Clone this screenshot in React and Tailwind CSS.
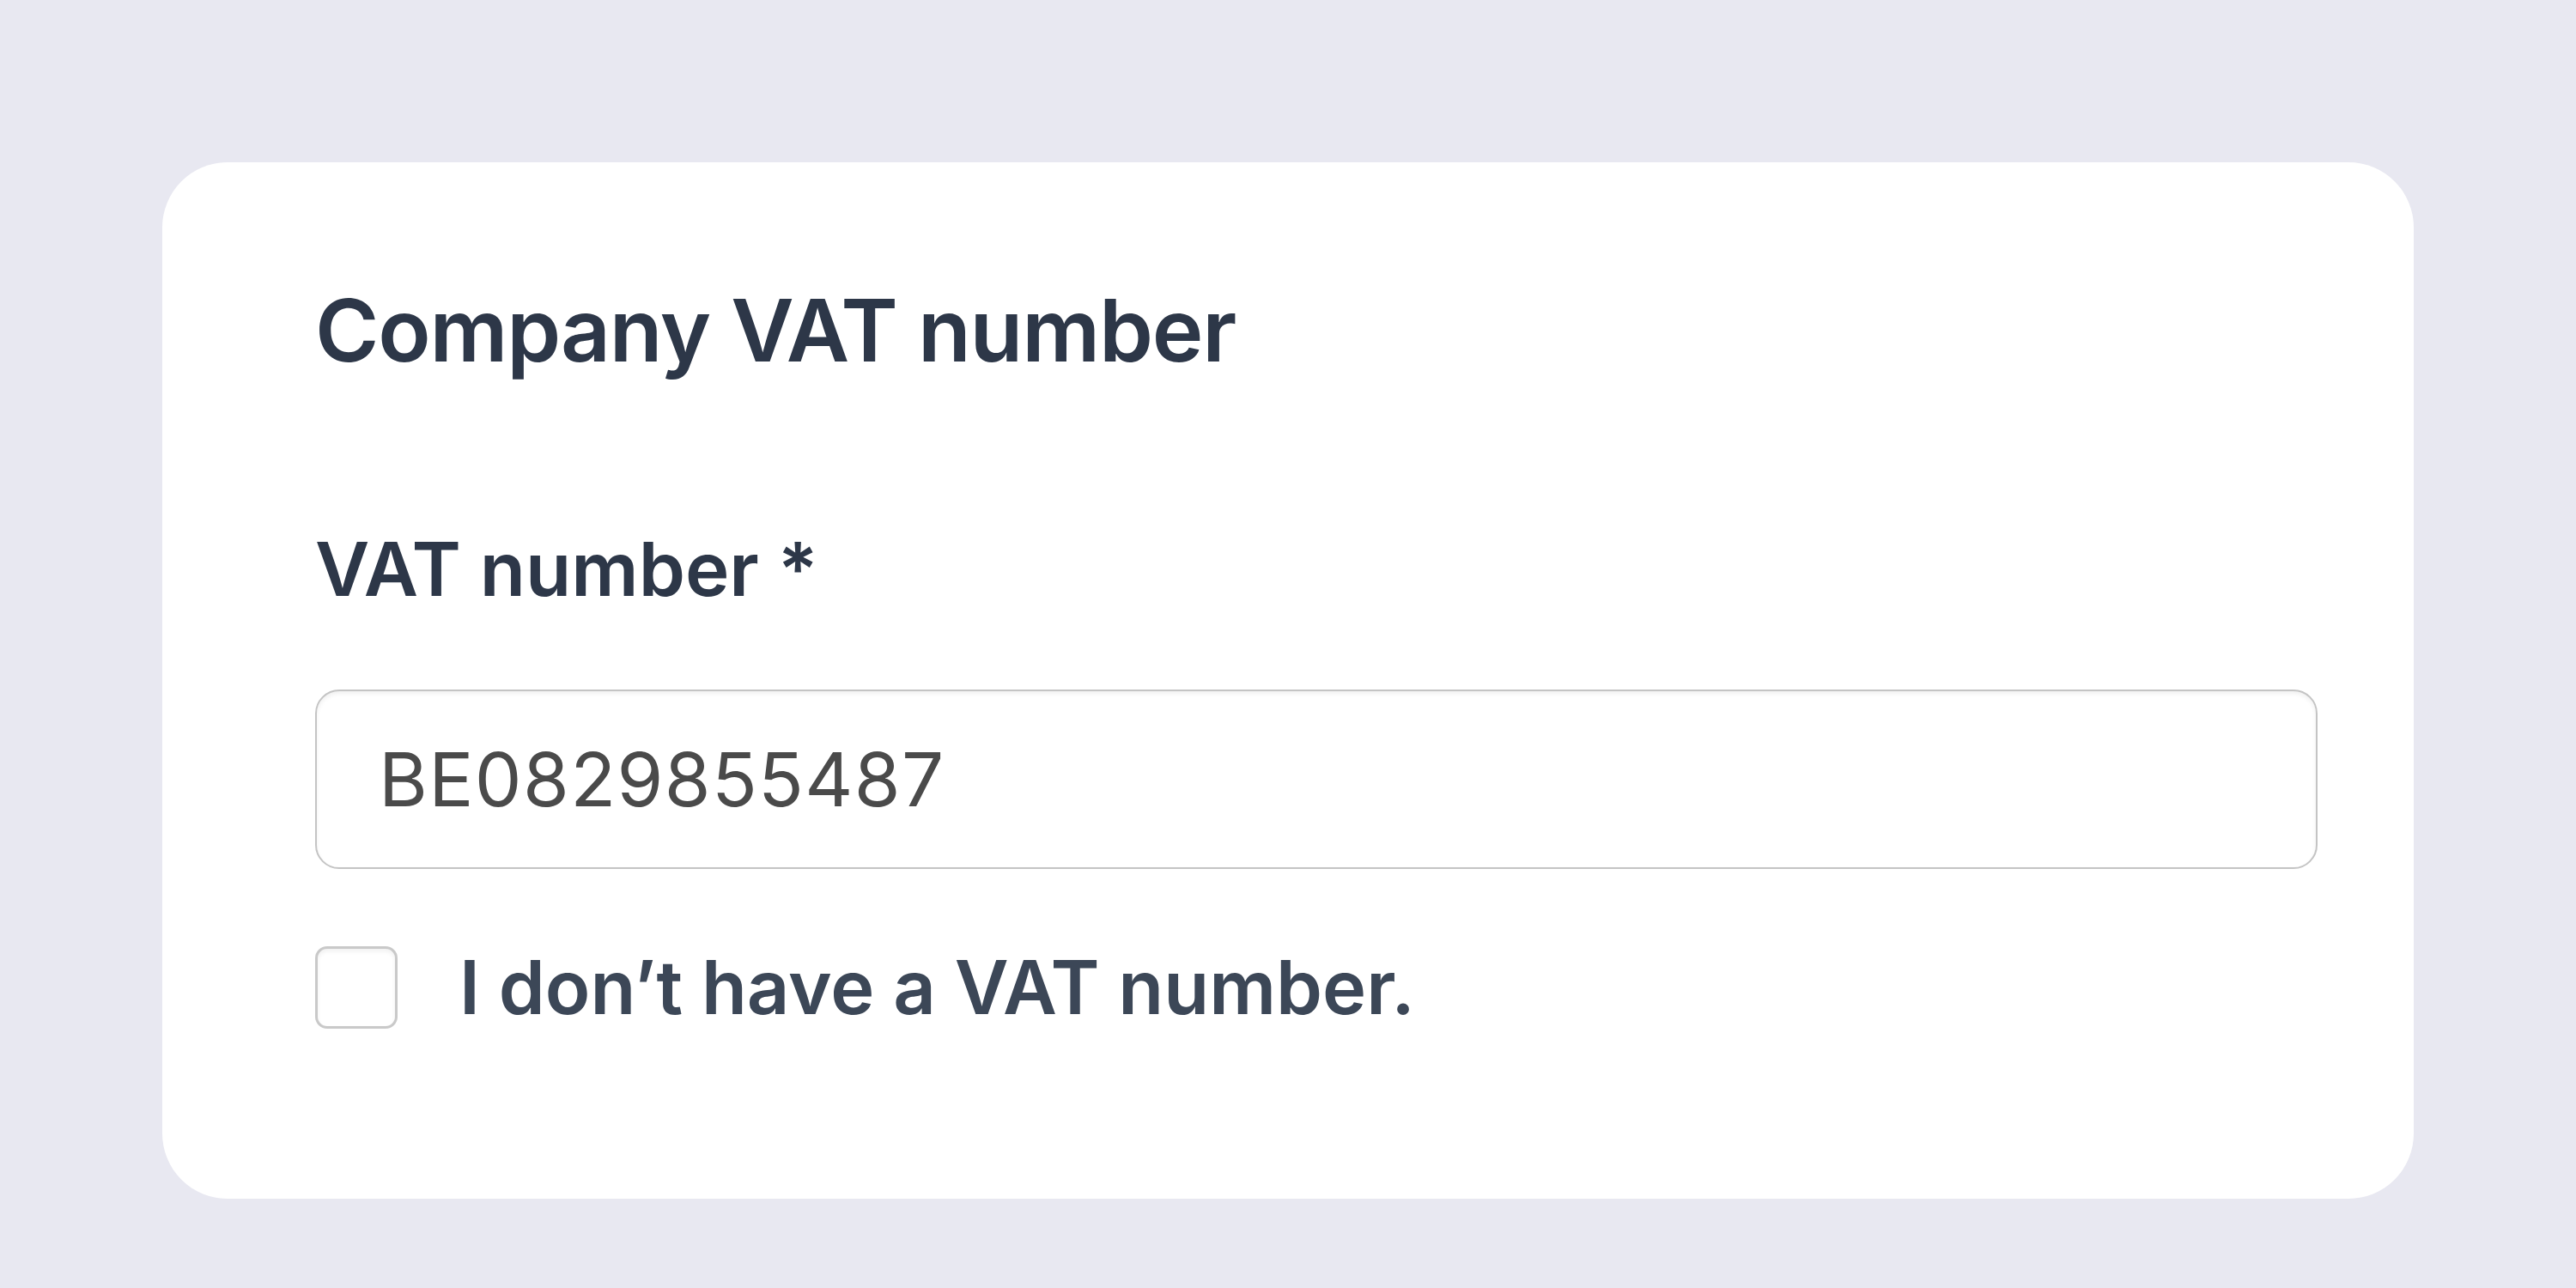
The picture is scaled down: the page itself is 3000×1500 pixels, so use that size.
import React from "react";

export default function App() {
  return (
    <div className="w-[3000px] h-[1500px] bg-[#e8e8f1] pt-[189px] px-[189px] [font-family:Inter,'Noto_Sans',sans-serif]">
      <div className="bg-white rounded-[76px] h-[1207px] pl-[178px] pr-[112px] pt-[145px] flex flex-col">
        <h2 className="text-[101px] leading-[1] font-semibold tracking-[-0.012em] text-[#2d3748]">
          Company VAT number
        </h2>
        <label
          htmlFor="vat"
          className="mt-[184px] text-[87px] leading-[1] font-semibold text-[#2d3748]"
        >
          VAT number *
        </label>
        <input
          id="vat"
          readOnly
          value="BE0829855487"
          className="mt-[97px] h-[209px] w-full rounded-[28px] border-[2.5px] border-[#c4c4c4] bg-white pl-[72px] text-[87px] leading-[1] tracking-[0.015em] text-[#4a4a4a] shadow-[inset_0_3px_5px_rgba(0,0,0,0.06)] outline-none"
        />
        <div className="mt-[90px] flex items-center gap-[72px]">
          <span className="block w-[96px] h-[96px] rounded-[14px] border-[3px] border-[#c9c9c9] bg-white shadow-[inset_0_3px_5px_rgba(0,0,0,0.06)]" />
          <span className="text-[86.5px] leading-[1] font-semibold text-[#3c4757]">
            I don’t have a VAT number.
          </span>
        </div>
      </div>
    </div>
  );
}
